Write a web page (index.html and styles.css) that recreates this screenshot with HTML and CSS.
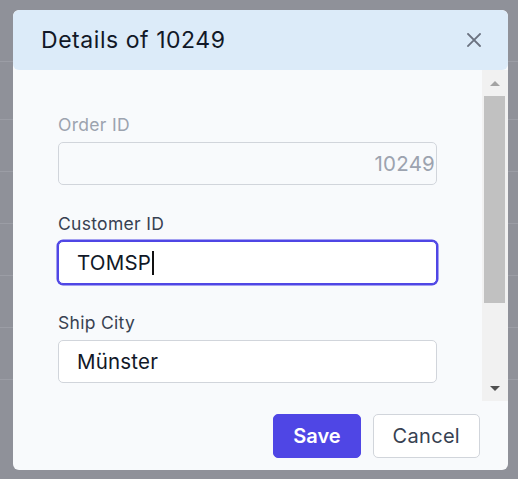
FILE: index.html
```html
<!DOCTYPE html>
<html lang="en">
<head>
<meta charset="utf-8">
<title>Details of 10249</title>
<link rel="stylesheet" href="styles.css">
</head>
<body>
<div class="page">
  <div class="grid">
    <div class="grid-row grid-head"></div>
    <div class="grid-row grid-first"></div>
    <div class="grid-row"></div>
    <div class="grid-row"></div>
    <div class="grid-row"></div>
    <div class="grid-row"></div>
    <div class="grid-row"></div>
  </div>
  <div class="dialog">
    <div class="header">
      <h2 class="title">Details of 10249</h2>
      <button class="close" aria-label="Close">
        <svg width="14" height="14" viewBox="0 0 14 14"><path d="M1 1L13 13M13 1L1 13" stroke="#6b7280" stroke-width="1.8" stroke-linecap="square" fill="none"/></svg>
      </button>
    </div>
    <div class="body">
      <div class="content">
        <div class="field">
          <label class="label label-disabled">Order ID</label>
          <div class="input input-disabled">10249</div>
        </div>
        <div class="field">
          <label class="label">Customer ID</label>
          <div class="input input-focus">TOMSP<span class="caret"></span></div>
        </div>
        <div class="field">
          <label class="label">Ship City</label>
          <div class="input">Münster</div>
        </div>
      </div>
      <div class="scrollbar">
        <div class="sb-button"><span class="tri tri-up"></span></div>
        <div class="sb-track"><div class="sb-thumb"></div></div>
        <div class="sb-button"><span class="tri tri-down"></span></div>
      </div>
    </div>
    <div class="footer">
      <button class="btn btn-primary">Save</button>
      <button class="btn btn-secondary">Cancel</button>
    </div>
  </div>
</div>
</body>
</html>
```
FILE: styles.css
```css
* { box-sizing: border-box; }
body {
  margin: 0;
  font-family: Inter, "Noto Sans", sans-serif;
}
.page {
  position: relative;
  width: 518px;
  height: 479px;
  background: #8f9199;
  overflow: hidden;
}
.grid-row {
  height: 52px;
  border-bottom: 1px solid #9b9da5;
}
.grid-head { height: 62px; }
.grid-first { height: 58px; }

.dialog {
  position: absolute;
  left: 13px;
  top: 10px;
  width: 495px;
  height: 460px;
  background: #f8fafc;
  border-radius: 6px;
  display: flex;
  flex-direction: column;
  overflow: hidden;
}
.header {
  flex: none;
  height: 60px;
  background: #dcebf9;
  border-radius: 6px;
  display: flex;
  align-items: center;
  justify-content: space-between;
  padding: 0 26px 0 28px;
}
.title {
  margin: 0;
  font-size: 23px;
  letter-spacing: 0.55px;
  font-weight: 400;
  color: #111827;
}
.close {
  border: 0;
  background: none;
  padding: 0;
  width: 16px;
  height: 16px;
  display: flex;
  align-items: center;
  justify-content: center;
}
.body {
  flex: none;
  height: 331px;
  display: flex;
}
.content {
  flex: 1;
  overflow: hidden;
  padding: 43px 45px 130px 45px;
}
.field { margin-bottom: 27px; }
.label {
  display: block;
  font-size: 17.5px;
  letter-spacing: 0.3px;
  line-height: 24px;
  color: #374151;
  margin-bottom: 5px;
}
.label-disabled { color: #9ca3af; }
.input {
  height: 43px;
  border: 1px solid #d1d5db;
  border-radius: 5px;
  background: #ffffff;
  padding: 0 18px;
  font-size: 20.5px;
  letter-spacing: 0.2px;
  color: #111827;
  display: flex;
  align-items: center;
}
.input-disabled {
  background: #f8fafc;
  color: #9ca3af;
  justify-content: flex-end;
  padding-right: 1px;
}
.input-focus {
  border-color: #4f46e5;
  box-shadow: 0 0 0 1.5px #4f46e5;
}
.caret {
  width: 2px;
  height: 24px;
  background: #111111;
  margin-left: 1px;
}
.scrollbar {
  flex: none;
  width: 26px;
  background: #f1f1f1;
  display: flex;
  flex-direction: column;
}
.sb-button {
  flex: none;
  height: 26px;
  display: flex;
  align-items: center;
  justify-content: center;
}
.sb-track { flex: 1; }
.sb-thumb {
  margin-left: 2px;
  width: 21px;
  height: 207px;
  background: #c1c1c1;
}
.tri {
  width: 0;
  height: 0;
  border-left: 5.5px solid transparent;
  border-right: 5.5px solid transparent;
}
.tri-up { border-bottom: 5.5px solid #a3a3a3; }
.tri-down { border-top: 5.5px solid #505050; }

.footer {
  flex: 1;
  display: flex;
  justify-content: flex-end;
  align-items: flex-start;
  gap: 12px;
  padding: 13px 28px 0 0;
}
.btn {
  height: 44px;
  font-family: Inter, "Noto Sans", sans-serif;
  font-size: 20px;
  border-radius: 5px;
  padding: 0 19px;
  cursor: pointer;
}
.btn-primary {
  background: #4f46e5;
  border: 1px solid #4f46e5;
  color: #ffffff;
  font-weight: 600;
}
.btn-secondary {
  background: #ffffff;
  border: 1px solid #d1d5db;
  color: #374151;
  letter-spacing: 0.3px;
}
```
